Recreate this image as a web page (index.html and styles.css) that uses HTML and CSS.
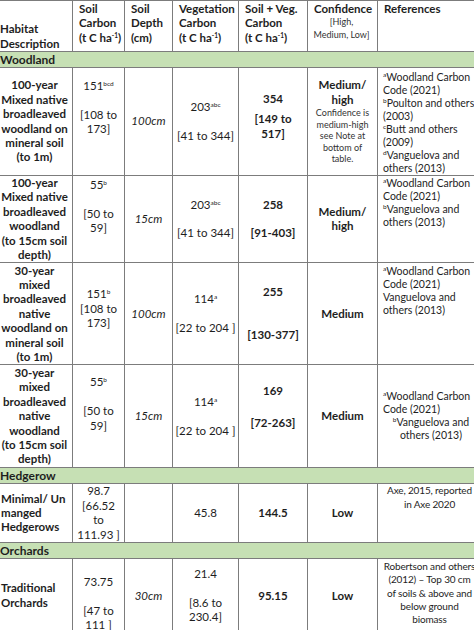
FILE: index.html
```html
<!DOCTYPE html>
<html>
<head>
<meta charset="utf-8">
<link rel="stylesheet" href="styles.css">
</head>
<body>
<div class="frame">
<table class="carbon">
  <colgroup>
    <col class="w1"><col class="w2"><col class="w3"><col class="w4"><col class="w5"><col class="w6"><col class="w7">
  </colgroup>
  <thead>
    <tr class="h-head">
      <th class="hab-h">Habitat<br>Description</th>
      <th>Soil<br>Carbon<br>(t C ha<sup>-1</sup>)</th>
      <th>Soil<br>Depth<br>(cm)</th>
      <th>Vegetation<br>Carbon<br>(t C ha<sup>-1</sup>)</th>
      <th>Soil + Veg.<br>Carbon<br>(t C ha<sup>-1</sup>)</th>
      <th>Confidence<span class="conf-sub">[High,<br>Medium, Low]</span></th>
      <th>References</th>
    </tr>
  </thead>
  <tbody>
    <tr class="band"><td colspan="7">Woodland</td></tr>

    <tr class="h-r1">
      <td class="hab">100-year<br>Mixed native<br>broadleaved<br>woodland on<br>mineral soil<br>(to 1m)</td>
      <td class="top pt11">151<sup>bcd</sup><br><br>[108 to<br>173]</td>
      <td class="it">100cm</td>
      <td>203<sup>abc</sup><br><br>[41 to 344]</td>
      <td class="b top pt24"><div class="gap6">354</div>[149 to<br>517]</td>
      <td class="b">Medium/<br>high<span class="note">Confidence is<br>medium-high<br>see Note at<br>bottom of<br>table.</span></td>
      <td class="ref pt3"><sup>a</sup>Woodland Carbon<br>Code (2021)<br><sup>b</sup>Poulton and others<br>(2003)<br><sup>c</sup>Butt and others<br>(2009)<br><sup>d</sup>Vanguelova and<br>others (2013)</td>
    </tr>

    <tr class="h-r2">
      <td class="hab">100-year<br>Mixed native<br>broadleaved<br>woodland<br>(to 15cm soil<br>depth)</td>
      <td class="top pt2">55<sup>b</sup><br><br>[50 to<br>59]</td>
      <td class="it">15cm</td>
      <td>203<sup>abc</sup><br><br>[41 to 344]</td>
      <td class="b">258<br><br>[91-403]</td>
      <td class="b">Medium/<br>high</td>
      <td class="ref pt1"><sup>a</sup>Woodland Carbon<br>Code (2021)<br><sup>b</sup>Vanguelova and<br>others (2013)</td>
    </tr>

    <tr class="h-r3">
      <td class="hab">30-year<br>mixed<br>broadleaved<br>native<br>woodland on<br>mineral soil<br>(to 1m)</td>
      <td class="top pt24">151<sup>b</sup><br>[108 to<br>173]</td>
      <td class="it">100cm</td>
      <td>114<sup>a</sup><br><br>[22 to 204 ]</td>
      <td class="b">255<br><br><br>[130-377]</td>
      <td class="b">Medium</td>
      <td class="ref pt2"><sup>a</sup>Woodland Carbon<br>Code (2021)<br>Vanguelova and<br>others (2013)</td>
    </tr>

    <tr class="h-r4">
      <td class="hab">30-year<br>mixed<br>broadleaved<br>native<br>woodland<br>(to 15cm soil<br>depth)</td>
      <td class="top pt10">55<sup>b</sup><br><br>[50 to<br>59]</td>
      <td class="it">15cm</td>
      <td>114<sup>a</sup><br><br>[22 to 204 ]</td>
      <td class="b top pt19"><div class="gap17">169</div>[72-263]</td>
      <td class="b">Medium</td>
      <td class="ref mid"><sup>a</sup>Woodland Carbon<br>Code (2021)<br><span class="ctr"><sup>b</sup>Vanguelova and<br>others (2013)</span></td>
    </tr>

    <tr class="band"><td colspan="7">Hedgerow</td></tr>

    <tr class="h-r5">
      <td class="hab l">Minimal/ Un<br>manged<br>Hedgerows</td>
      <td>98.7<br>[66.52<br>to<br>111.93 ]</td>
      <td></td>
      <td>45.8</td>
      <td class="b">144.5</td>
      <td class="b">Low</td>
      <td class="ref ctr-all tight">Axe, 2015, reported<br>in Axe 2020</td>
    </tr>

    <tr class="band"><td colspan="7">Orchards</td></tr>

    <tr class="h-r6">
      <td class="hab l">Traditional<br>Orchards</td>
      <td class="top pt16">73.75<br><br>[47 to<br>111 ]</td>
      <td class="it">30cm</td>
      <td>21.4<br><br>[8.6 to<br>230.4]</td>
      <td class="b">95.15</td>
      <td class="b">Low</td>
      <td class="ref ctr-all pt1 tight">Robertson and others<br>(2012) – Top 30 cm<br>of soils &amp; above and<br>below ground<br>biomass</td>
    </tr>
  </tbody>
</table>
</div>
</body>
</html>
```

FILE: styles.css
```css
html, body {
  margin: 0;
  padding: 0;
  background: #ffffff;
}

.frame {
  width: 474px;
  height: 630px;
  overflow: hidden;
  background: #ffffff;
}

.carbon {
  margin-left: -4px;
  width: 489px;
  table-layout: fixed;
  border-collapse: collapse;
  font-family: Lato, "Open Sans", sans-serif;
  font-size: 11.5px;
  line-height: 14.4px;
  color: #1e1e1e;
}

.w1 { width: 76px; }
.w2 { width: 52px; }
.w3 { width: 48px; }
.w4 { width: 66px; }
.w5 { width: 69px; }
.w6 { width: 70px; }
.w7 { width: 108px; }

.carbon th,
.carbon td {
  border: 1px solid #7c7c7c;
  padding: 0 2px;
  text-align: center;
  vertical-align: middle;
  overflow: hidden;
}

.carbon th {
  font-weight: 700;
  text-align: left;
  vertical-align: top;
  padding: 1px 4px 0 6px;
  white-space: nowrap;
}

.carbon th.hab-h {
  vertical-align: bottom;
  padding: 0 0 0 3px;
}

.conf-sub {
  display: block;
  font-weight: 400;
  font-size: 9px;
  line-height: 12.5px;
  text-align: center;
  color: #333;
  margin-left: -4px;
}

sup {
  font-size: 6.5px;
  line-height: 0;
  vertical-align: 4px;
}

.h-head { height: 51px; }
.h-r1 { height: 106px; }
.h-r2 { height: 87px; }
.h-r3 { height: 102px; }
.h-r4 { height: 103px; }
.h-r5 { height: 58px; }
.h-r6 { height: 74px; }

.band td {
  background: #c6e0b4;
  text-align: left;
  font-weight: 700;
  font-size: 12px;
  line-height: 15px;
  height: 15px;
  padding: 0 0 0 3px;
}

.carbon td.hab {
  font-weight: 700;
  padding: 0 1px;
}

.carbon td.l {
  text-align: left;
  padding-left: 4px;
}

.b { font-weight: 700; }
.it { font-style: italic; }

.carbon td.top { vertical-align: top; }
.carbon td.pt1 { padding-top: 1px; }
.carbon td.pt2 { padding-top: 2px; }
.carbon td.pt3 { padding-top: 3px; }
.carbon td.pt10 { padding-top: 10px; }
.carbon td.pt11 { padding-top: 11px; }
.carbon td.pt16 { padding-top: 16px; }
.carbon td.pt19 { padding-top: 19px; }
.carbon td.pt24 { padding-top: 24px; }

.gap6 { margin-bottom: 6px; }
.gap17 { margin-bottom: 17px; }

.note {
  display: block;
  font-weight: 400;
  font-size: 9px;
  line-height: 11.5px;
  color: #333;
}

.carbon td.ref {
  text-align: left;
  vertical-align: top;
  font-size: 10.5px;
  line-height: 13px;
  padding-left: 5px;
  padding-right: 0;
  white-space: nowrap;
}

.carbon td.ref.mid { vertical-align: middle; }

.ctr {
  display: block;
  text-align: center;
  margin-left: -6px;
}

.carbon td.ctr-all {
  text-align: center;
  padding-left: 0;
  padding-right: 4px;
}

.carbon td.tight {
  font-size: 10px;
  letter-spacing: -0.15px;
  line-height: 13.3px;
}
```
